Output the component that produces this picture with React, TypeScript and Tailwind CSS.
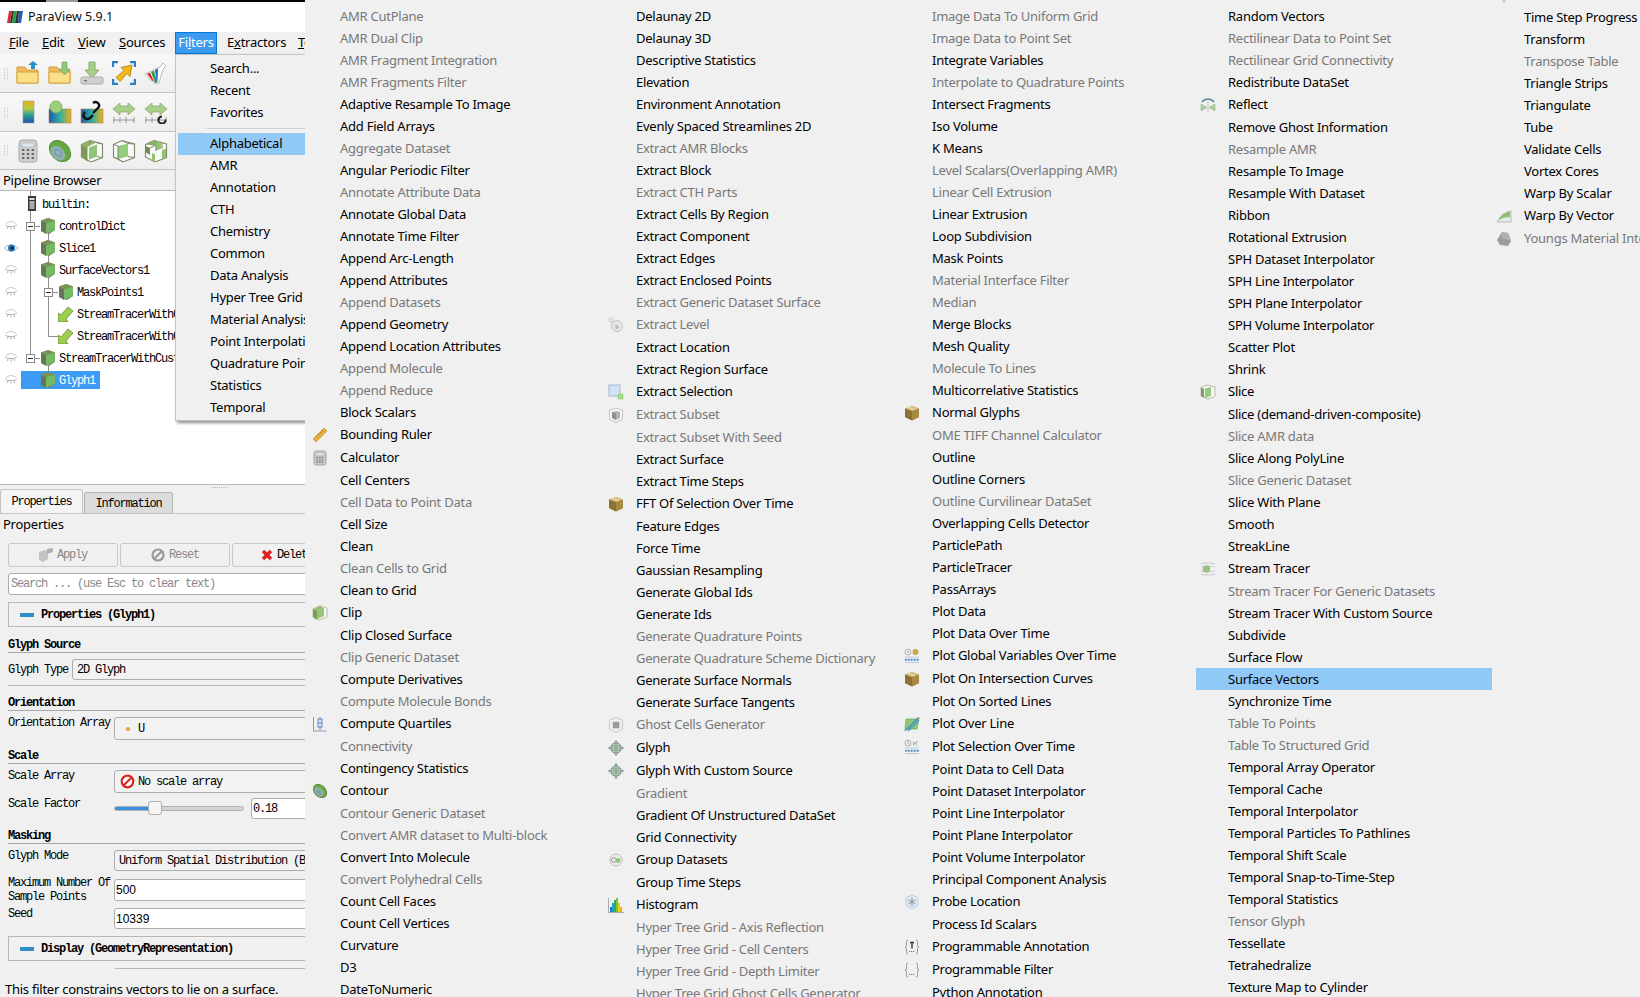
import React from "react";

const SANS = "font-['Noto_Sans',sans-serif]";
const MONO = "font-['Liberation_Mono',monospace] text-[12px] tracking-[-1.2px]";

type IconName =
  | "ruler" | "calc" | "clip" | "quart" | "contour" | "level" | "sel" | "subset" | "box" | "ghost" | "glyph"
  | "group" | "hist" | "plotg" | "plotl" | "plots" | "probe" | "proga" | "progf" | "reflect" | "slice"
  | "stream" | "warp" | "youngs" | "thresh";

function MenuIcon({ name }: { name: IconName }) {
  const p = { width: 16, height: 16, viewBox: "0 0 16 16" };
  switch (name) {
    case "ruler":
      return <svg {...p}><path d="M1 12 12 1l3 3L4 15z" fill="#e8b23c" stroke="#b98a22" strokeWidth=".6" /><path d="M4 9l1.5 1.5M6 7l1.5 1.5M8 5l1.5 1.5M10 3l1.5 1.5" stroke="#8a6a20" strokeWidth=".7" /></svg>;
    case "calc":
      return <svg {...p}><rect x="2" y="1" width="12" height="14" rx="2" fill="#c9c9c9" stroke="#a8a8a8" /><rect x="4" y="3" width="8" height="2.5" fill="#e6edf2" stroke="#9aa" strokeWidth=".4" /><path d="M4.5 7.5h7M4.5 9.8h7M4.5 12h7" stroke="#7c7c7c" strokeWidth="1.3" strokeDasharray="1.5 1.1" /></svg>;
    case "clip":
      return <svg {...p}><path d="M1 4l7-3 7 2v9l-8 3-6-3z" fill="#f6f6f6" stroke="#a8ad98" strokeWidth=".8" /><path d="M1 4l4 1.500V15l-4-3z" fill="#7f9c56" /><path d="M5 5.500l7-2v7.500l-7 3z" fill="#8fc878" /><path d="M1 4l7-3 4 2.500-7 2z" fill="#9db86f" /></svg>;
    case "quart":
      return <svg {...p}><path d="M1.5 1v14h13" fill="none" stroke="#8a9ab5" strokeWidth="1" /><rect x="6" y="3" width="4" height="8" fill="#dce8f8" stroke="#3f6fb5" strokeWidth=".8" /><path d="M8 1v2M8 11v3M6 7h4" stroke="#3f6fb5" strokeWidth=".8" /></svg>;
    case "contour":
      return <svg {...p}><ellipse cx="8" cy="8" rx="5.5" ry="7.5" transform="rotate(-45 8 8)" fill="#6fa845" stroke="#5d8a3e" /><ellipse cx="7" cy="9" rx="3.7" ry="5.4" transform="rotate(-45 7 9)" fill="#8fb2a8" /><ellipse cx="6.8" cy="9.2" rx="2" ry="3.2" transform="rotate(-45 7 9)" fill="#7aa0b2" /></svg>;
    case "level":
      return <svg {...p}><circle cx="9" cy="9" r="5.5" fill="#e6e6e6" stroke="#c4c4c4" /><circle cx="9" cy="10" r="2" fill="#bdbdbd" /><circle cx="3" cy="3" r="2" fill="none" stroke="#c4c4c4" /><path d="M4.5 4.5l1.5 1.5" stroke="#c4c4c4" /></svg>;
    case "sel":
      return <svg {...p}><rect x="1" y="1" width="11" height="11" fill="#d2e3f5" stroke="#a6b8cc" /><rect x="10" y="10" width="5" height="5" fill="#a6e08a" stroke="#74b45a" strokeDasharray="1 1" strokeWidth=".8" /></svg>;
    case "subset":
      return <svg {...p}><path d="M8 1l6.500 2v9.500L8 15.500l-6.500-3V3z" fill="#f2f2f2" stroke="#c4c4c4" /><path d="M4 5l4-1 4 1v6l-4 2-4-2z" fill="#b3b3b3" /><path d="M4 5l4 1.5V13l-4-2z" fill="#8e8e8e" /></svg>;
    case "box":
      return <svg {...p}><path d="M8 1l7 2.4V12l-7 3.4L1 12V3.4z" fill="#a58a4f" /><path d="M1 3.4 8 6v9.4L1 12z" fill="#8c7034" /><path d="M8 6l7-2.6V12l-7 3.4z" fill="#a78a3f" /><path d="M8 1l7 2.4L8 6 1 3.4z" fill="#d6be83" /><path d="M4 2l7 2.6" stroke="#f0e2b8" /></svg>;
    case "ghost":
      return <svg {...p}><path d="M8 .5l6.500 2.500v9.500L8 15.500l-6.500-3V3z" fill="#f0f0f0" stroke="#c9c9c9" /><rect x="4.800" y="4.800" width="6.500" height="6.500" fill="#9a9a9a" /></svg>;
    case "glyph":
      return <svg {...p}><circle cx="8" cy="8" r="5.2" fill="#b5d2ae" stroke="#7a8c90" /><path d="M8 3v10M3 8h10M4 5.2c2.5 1.2 5.5 1.2 8 0M4 10.8c2.5-1.2 5.5-1.2 8 0" stroke="#7a8c90" strokeWidth=".7" fill="none" /><path d="M8 0l2 2.2H6zM8 16l2-2.2H6zM0 8l2.2-2v4zM16 8l-2.2-2v4z" fill="#8a9a9e" /></svg>;
    case "group":
      return <svg {...p}><circle cx="8" cy="8" r="6" fill="#ededed" stroke="#bdbdbd" /><circle cx="6" cy="8" r="2.4" fill="none" stroke="#9a9a9a" /><circle cx="10" cy="8.5" r="2.4" fill="#8cc97a" /></svg>;
    case "hist":
      return <svg {...p}><path d="M.5 1v14.5H16" fill="none" stroke="#99a" strokeWidth=".8" /><rect x="2" y="10" width="2" height="5" fill="#2f6fd0" /><rect x="4" y="6" width="2" height="9" fill="#18a0d8" /><rect x="6" y="3" width="2" height="12" fill="#2aae5a" /><rect x="8" y="1" width="2" height="14" fill="#7cc23a" /><rect x="10" y="6" width="2" height="9" fill="#e8d020" /><rect x="12" y="10" width="2" height="5" fill="#f0b010" /></svg>;
    case "plotg":
      return <svg {...p}><circle cx="4" cy="4" r="3" fill="#eee" stroke="#999" strokeWidth=".7" /><path d="M4 2.2V4l1.4 1" stroke="#777" strokeWidth=".6" fill="none" /><circle cx="11.5" cy="4" r="3" fill="#c9a847" /><path d="M1 9h14M1 14.5h14" stroke="#bcd" /><path d="M1 11.8h1.6M3.6 11.8h2M6.6 11.8h2M9.6 11.8h2M12.6 11.8h2" stroke="#4a8ac8" strokeWidth="2" /></svg>;
    case "plots":
      return <svg {...p}><circle cx="4" cy="4" r="3" fill="#eee" stroke="#999" strokeWidth=".7" /><path d="M4 2.2V4l1.4 1" stroke="#777" strokeWidth=".6" fill="none" /><path d="M9 2l2 2 2-2 1 1-2 2 2 2-1 0-2-2-2 2z" fill="#9cc8a0" /><path d="M1 9h14M1 14.5h14" stroke="#bcd" /><path d="M1 11.8h1.6M3.6 11.8h2M6.6 11.8h2M9.6 11.8h2M12.6 11.8h2" stroke="#4a8ac8" strokeWidth="2" /></svg>;
    case "plotl":
      return <svg {...p}><path d="M2 3h12l1-2-2 12H2l-1 2z" fill="#8fc878" stroke="#6f9d58" strokeWidth=".7" /><path d="M2 14L14 2M4 15L15 4" stroke="#3a8fc0" strokeWidth="1.200" /></svg>;
    case "probe":
      return <svg {...p}><path d="M8 1l6 2.5v8L8 15l-6-3.5v-8z" fill="#dbe7f3" stroke="#c6d3df" /><path d="M8 4v8M4.5 6l7 4M11.5 6l-7 4" stroke="#7b8b99" strokeWidth=".9" /></svg>;
    case "proga":
    case "progf":
      return <svg {...p}><path d="M4 1C2 1 2.500 3 2.500 5S2.500 7.500 1 8c1.500.5 1.500 1 1.500 3s-.5 4 1.500 4M12 1c2 0 1.500 2 1.500 4s0 2.500 1.500 3c-1.500.5-1.500 1-1.500 3s.5 4-1.500 4" fill="none" stroke="#8a8a8a" strokeWidth=".9" /><path d="M5 12.500h6" stroke="#4a86c6" strokeWidth="1.200" strokeDasharray="1.200 .9" />{name === "proga" ? <path d="M6 3.500h4M8 3.500v6" stroke="#333" strokeWidth="1.400" /> : null}</svg>;
    case "reflect":
      return <svg {...p}><path d="M1 7l6 3.5L1 14zM15 7l-6 3.5 6 3.500z" fill="#a8d09a" stroke="#8fa88a" strokeWidth=".5" /><path d="M8 2v14" stroke="#c4c4c4" /><path d="M2 5c3-4 9-4 12 0" fill="none" stroke="#5b8a93" strokeWidth="1.600" /></svg>;
    case "slice":
      return <svg {...p}><path d="M1 3.5 7 1l8 2v9.5L8 15l-7-3z" fill="#f6f6f6" stroke="#a9ad9d" strokeWidth=".8" /><path d="M1 3.5 4 5v9l-3-2z" fill="#87995f" /><path d="M5 4.5 11 3v9l-6 2z" fill="#93cb7c" /></svg>;
    case "stream":
      return <svg {...p}><path d="M1 3c4-1.500 10-1.500 14 0M1 6c4-1 10-1 14 0M1 10c4 1 10 1 14 0M1 13c4 1.500 10 1.500 14 0" fill="none" stroke="#c4c4c4" strokeWidth=".9" /><circle cx="6.500" cy="8" r="3.200" fill="#90cc7c" stroke="#a0a896" /></svg>;
    case "warp":
      return <svg {...p}><path d="M1 14h14V3c-4 1-6 2.500-8 5-2 1.500-4 3-6 6z" fill="#eaeaea" stroke="#a5a5a5" strokeWidth=".7" /><path d="M2 12c2-3 4-6 7-7l5-2v6c-4 0-7 1-12 3z" fill="#8fc06e" /></svg>;
    case "youngs":
      return <svg {...p}><path d="M6 1l6 1 3 8-3 5-8-1-3-5z" fill="#9c9c9c" /><path d="M6 1l6 1 3 8-9-3z" fill="#b0b0b0" /></svg>;
    case "thresh":
      return <svg {...p}><circle cx="8" cy="8" r="5" fill="#e8e8e8" stroke="#aaa" /><path d="M8 0v16M0 8h16" stroke="#aaa" /></svg>;
  }
}

type Item = string | [string, IconName?, boolean?];
const d = (s: string, i?: IconName): Item => [s, i, true];
const ic = (s: string, i: IconName): Item => [s, i, false];

const col1: Item[] = [
  d("AMR CutPlane"), d("AMR Dual Clip"), d("AMR Fragment Integration"), d("AMR Fragments Filter"), "Adaptive Resample To Image", "Add Field Arrays",
  d("Aggregate Dataset"), "Angular Periodic Filter", d("Annotate Attribute Data"), "Annotate Global Data", "Annotate Time Filter", "Append Arc-Length",
  "Append Attributes", d("Append Datasets"), "Append Geometry", "Append Location Attributes", d("Append Molecule"), d("Append Reduce"), "Block Scalars",
  ic("Bounding Ruler", "ruler"), ic("Calculator", "calc"), "Cell Centers", d("Cell Data to Point Data"), "Cell Size", "Clean", d("Clean Cells to Grid"),
  "Clean to Grid", ic("Clip", "clip"), "Clip Closed Surface", d("Clip Generic Dataset"), "Compute Derivatives", d("Compute Molecule Bonds"),
  ic("Compute Quartiles", "quart"), d("Connectivity"), "Contingency Statistics", ic("Contour", "contour"), d("Contour Generic Dataset"),
  d("Convert AMR dataset to Multi-block"), "Convert Into Molecule", d("Convert Polyhedral Cells"), "Count Cell Faces", "Count Cell Vertices", "Curvature", "D3", "DateToNumeric",
];
const col2: Item[] = [
  "Delaunay 2D", "Delaunay 3D", "Descriptive Statistics", "Elevation", "Environment Annotation", "Evenly Spaced Streamlines 2D", d("Extract AMR Blocks"),
  "Extract Block", d("Extract CTH Parts"), "Extract Cells By Region", "Extract Component", "Extract Edges", "Extract Enclosed Points",
  d("Extract Generic Dataset Surface"), d("Extract Level", "level"), "Extract Location", "Extract Region Surface", ic("Extract Selection", "sel"),
  d("Extract Subset", "subset"), d("Extract Subset With Seed"), "Extract Surface", "Extract Time Steps", ic("FFT Of Selection Over Time", "box"), "Feature Edges",
  "Force Time", "Gaussian Resampling", "Generate Global Ids", "Generate Ids", d("Generate Quadrature Points"), d("Generate Quadrature Scheme Dictionary"),
  "Generate Surface Normals", "Generate Surface Tangents", d("Ghost Cells Generator", "ghost"), ic("Glyph", "glyph"), ic("Glyph With Custom Source", "glyph"),
  d("Gradient"), "Gradient Of Unstructured DataSet", "Grid Connectivity", ic("Group Datasets", "group"), "Group Time Steps", ic("Histogram", "hist"),
  d("Hyper Tree Grid - Axis Reflection"), d("Hyper Tree Grid - Cell Centers"), d("Hyper Tree Grid - Depth Limiter"), d("Hyper Tree Grid Ghost Cells Generator"),
];
const col3: Item[] = [
  d("Image Data To Uniform Grid"), d("Image Data to Point Set"), "Integrate Variables", d("Interpolate to Quadrature Points"), "Intersect Fragments", "Iso Volume", "K Means",
  d("Level Scalars(Overlapping AMR)"), d("Linear Cell Extrusion"), "Linear Extrusion", "Loop Subdivision", "Mask Points", d("Material Interface Filter"), d("Median"),
  "Merge Blocks", "Mesh Quality", d("Molecule To Lines"), "Multicorrelative Statistics", ic("Normal Glyphs", "box"), d("OME TIFF Channel Calculator"), "Outline",
  "Outline Corners", d("Outline Curvilinear DataSet"), "Overlapping Cells Detector", "ParticlePath", "ParticleTracer", "PassArrays", "Plot Data", "Plot Data Over Time",
  ic("Plot Global Variables Over Time", "plotg"), ic("Plot On Intersection Curves", "box"), "Plot On Sorted Lines", ic("Plot Over Line", "plotl"),
  ic("Plot Selection Over Time", "plots"), "Point Data to Cell Data", "Point Dataset Interpolator", "Point Line Interpolator", "Point Plane Interpolator",
  "Point Volume Interpolator", "Principal Component Analysis", ic("Probe Location", "probe"), "Process Id Scalars", ic("Programmable Annotation", "proga"),
  ic("Programmable Filter", "progf"), "Python Annotation",
];
const col4: Item[] = [
  "Random Vectors", d("Rectilinear Data to Point Set"), d("Rectilinear Grid Connectivity"), "Redistribute DataSet", ic("Reflect", "reflect"), "Remove Ghost Information",
  d("Resample AMR"), "Resample To Image", "Resample With Dataset", "Ribbon", "Rotational Extrusion", "SPH Dataset Interpolator", "SPH Line Interpolator",
  "SPH Plane Interpolator", "SPH Volume Interpolator", "Scatter Plot", "Shrink", ic("Slice", "slice"), "Slice (demand-driven-composite)", d("Slice AMR data"),
  "Slice Along PolyLine", d("Slice Generic Dataset"), "Slice With Plane", "Smooth", "StreakLine", ic("Stream Tracer", "stream"), d("Stream Tracer For Generic Datasets"),
  "Stream Tracer With Custom Source", "Subdivide", "Surface Flow", "Surface Vectors", "Synchronize Time", d("Table To Points"), d("Table To Structured Grid"),
  "Temporal Array Operator", "Temporal Cache", "Temporal Interpolator", "Temporal Particles To Pathlines", "Temporal Shift Scale", "Temporal Snap-to-Time-Step",
  "Temporal Statistics", d("Tensor Glyph"), "Tessellate", "Tetrahedralize", "Texture Map to Cylinder",
];
const col5: Item[] = [
  ic("", "thresh"), "Time Step Progress Bar", "Transform", d("Transpose Table"), "Triangle Strips", "Triangulate", "Tube", "Validate Cells", "Vortex Cores", "Warp By Scalar",
  ic("Warp By Vector", "warp"), d("Youngs Material Interface", "youngs"),
];

function MenuRow({ item }: { item: Item }) {
  const [label, icon, dis] = typeof item === "string" ? [item, undefined, false] : item;
  const hi = label === "Surface Vectors";
  return (
    <div className={`flex items-center ${icon ? "h-[23px] pt-[1px]" : "h-[22px] pt-[2px]"} ${hi ? "bg-[#90c8f6]" : ""}`}>
      <div className="flex w-[32px] shrink-0 justify-start pl-[4px]">{icon ? <MenuIcon name={icon} /> : null}</div>
      <span className={`whitespace-nowrap ${dis ? "text-[#787878]" : "text-black"}`}>{label}</span>
    </div>
  );
}

function MenuCol({ items, className = "" }: { items: Item[]; className?: string }) {
  return (
    <div className={`w-[296px] shrink-0 pt-[5px] ${className}`}>
      {items.map((it, i) => (
        <MenuRow key={i} item={it} />
      ))}
    </div>
  );
}

function Grip() {
  return (
    <div className="ml-[4px] mr-[8px] grid w-[4px] grid-cols-2 gap-[1px]">
      {Array.from({ length: 12 }).map((_, i) => (
        <div key={i} className="h-[1px] w-[1px] bg-[#c8c8c8]" />
      ))}
    </div>
  );
}

const T = { width: 24, height: 24, viewBox: "0 0 24 24" };
function Cube3({ v }: { v: number }) {
  const frame = <path d="M1.500 5.500L10 1.500l12.500 3.500v13.500L11 23l-9.500-5z" fill="#fafafa" stroke="#7f8a6c" strokeWidth="1.100" />;
  return (
    <svg {...T}>
      {frame}
      {v === 0 ? (
        <>
          <path d="M1.500 5.500l6 2.500v14.500l-6-4.500z" fill="#7e9a56" />
          <path d="M1.500 5.500L10 1.500l6 2-8.500 4.500z" fill="#94ae68" />
          <path d="M9 8.500l8-3v12l-8 3z" fill="#8ec578" />
          <path d="M10 1.500V4M16 3.500l6.500 1.500M17 17.500l5.500 1" stroke="#7f8a6c" />
        </>
      ) : v === 1 ? (
        <>
          <path d="M6 7l10-2.500v13L6 20z" fill="#92cc7c" />
          <path d="M1.500 5.500L6 7v13l-4.500-2zM10 1.500L16 4.500" fill="none" stroke="#7f8a6c" />
          <path d="M16 4.500l6.500.5M16 17.500l6.500 1M6 20l5 3" stroke="#7f8a6c" />
        </>
      ) : (
        <>
          <path d="M1.500 5.500L10 1.500l7 2-7 3z" fill="#8ab066" />
          <path d="M2 7l4 2v7l-4-2.500z" fill="#6f8f52" />
          <path d="M12 4l5-1.500v7l-5 2zM18 11l4-1v8l-4 2zM8 14l3 1.500v7l-3-2z" fill="#8ec26c" />
          <path d="M6 9l6-3v6M18 3v7" stroke="#7f8a6c" fill="none" />
        </>
      )}
    </svg>
  );
}

function TbIcon({ n }: { n: string }) {
  switch (n) {
    case "open":
      return <svg {...T}><path d="M1 6h8l2 3h11v13H1z" fill="#f0ba5c" stroke="#d8a040" /><path d="M1 11h21v11H1z" fill="#fbe088" stroke="#d8a040" /><path d="M15 8V4h-3l5-4 5 4h-3v4z" fill="#2f8fc8" /></svg>;
    case "save":
      return <svg {...T}><path d="M1 6h8l2 3h11v13H1z" fill="#f0ba5c" stroke="#d8a040" /><path d="M1 11h21v11H1z" fill="#fbe088" stroke="#d8a040" /><path d="M14 1h5v7h3l-5.500 6-5.500-6h3z" fill="#8fc878" stroke="#6fa05a" strokeWidth=".6" /></svg>;
    case "load":
      return <svg {...T}><path d="M9 1h6v8h4l-7 8-7-8h4z" fill="#a6d08a" stroke="#86aa70" /><rect x="1" y="16" width="22" height="7" rx="1.500" fill="#d0d0d0" stroke="#aaa" /><rect x="4" y="19" width="3" height="1.500" fill="#777" /></svg>;
    case "reset":
      return <svg {...T}><path d="M1 6V1h5M18 1h5v5M23 18v5h-5M6 23H1v-5" fill="none" stroke="#2f80c0" strokeWidth="2.400" /><path d="M20 4L9 6.500l3 3-8 7 4 4 7-8 3 3z" fill="#f0b818" stroke="#a88010" strokeWidth=".8" /></svg>;
    case "flask":
      return <svg {...T}><path d="M1 13L16 6l3-4 3 3-3 3-4 14c-3 2-10-3-14-9z" fill="#fff" stroke="#bbb" /><path d="M3 13l3-1.500 4 9-2-1z" fill="#d23030" /><path d="M7 11l3-1.500 3 12.500-2 0z" fill="#2ea04c" /><path d="M11 9l3-1.500-.5 13.500-1 0z" fill="#1f6cc0" /></svg>;
    case "bar":
      return <svg {...T}><defs><linearGradient id="gb" x1="0" y1="0" x2="0" y2="1"><stop offset="0" stopColor="#e8b020" /><stop offset=".35" stopColor="#b8c840" /><stop offset=".6" stopColor="#30a890" /><stop offset="1" stopColor="#1c50b0" /></linearGradient></defs><rect x="7" y="1" width="11" height="22" fill="url(#gb)" stroke="#999" strokeWidth=".6" /></svg>;
    case "ball":
      return <svg {...T}><defs><linearGradient id="gm" x1="0" y1="0" x2="1" y2="0"><stop offset="0" stopColor="#2058b0" /><stop offset=".5" stopColor="#30b0a0" /><stop offset="1" stopColor="#f0b020" /></linearGradient></defs><rect x="1" y="9" width="22" height="14" fill="url(#gm)" stroke="#a88850" strokeWidth=".6" /><circle cx="8" cy="7" r="6" fill="#9cd078" stroke="#88a868" /></svg>;
    case "link":
      return <svg {...T}><defs><linearGradient id="gl" x1="0" y1="0" x2="1" y2="0"><stop offset="0" stopColor="#2058b0" /><stop offset=".5" stopColor="#30b0a0" /><stop offset="1" stopColor="#f0b020" /></linearGradient></defs><rect x="1" y="9" width="22" height="14" fill="url(#gl)" stroke="#a88850" strokeWidth=".6" /><path d="M13 3c4-3 8 2 5 5l-5 5M5 12c-4 4 1 9 5 6l3-3" fill="none" stroke="#111" strokeWidth="2.400" /></svg>;
    case "rng":
    case "rngc":
      return <svg {...T}><path d="M1 9l7-6v3h8V3l7 6-7 6v-3H8v3z" fill="#a8d08a" stroke="#88a070" strokeWidth=".7" /><path d="M1 20h22M2 17v6M8 17v6M14 17v6M22 17v6" stroke="#999" strokeWidth="1" />{n === "rngc" ? <circle cx="18" cy="20" r="3.500" fill="none" stroke="#222" strokeWidth="2" strokeDasharray="16 5" /> : null}</svg>;
    case "calc":
      return <svg {...T}><rect x="3" y="1" width="18" height="22" rx="3" fill="#cfcfcf" stroke="#a8a8a8" /><rect x="6" y="4" width="12" height="4" fill="#dde6ee" stroke="#9aa" strokeWidth=".5" /><path d="M6 11h12M6 15h12M6 19h12" stroke="#666" strokeWidth="2" strokeDasharray="2.400 2.400" /></svg>;
    case "contour":
      return <svg {...T}><ellipse cx="12" cy="12" rx="9" ry="12" transform="rotate(-45 12 12)" fill="#63a840" stroke="#5d8a3e" /><ellipse cx="10" cy="14" rx="6" ry="8.500" transform="rotate(-45 10 14)" fill="#8fb2a8" /><ellipse cx="10" cy="14" rx="3.500" ry="5.500" transform="rotate(-45 10 14)" fill="#7aa0b2" /><ellipse cx="10" cy="14" rx="1.500" ry="2.500" transform="rotate(-45 10 14)" fill="#9ab6c4" /></svg>;
    case "c0": return <Cube3 v={0} />;
    case "c1": return <Cube3 v={1} />;
    default: return <Cube3 v={2} />;
  }
}

function Toolbar({ icons, h }: { icons: string[]; h: string }) {
  return (
    <div className={`flex items-center border-b border-[#c4c4c4] bg-linear-to-b from-[#f8f8f8] to-[#eeeeee] ${h}`}>
      <Grip />
      <div className="flex gap-[8px]">
        {icons.map((n) => (
          <TbIcon key={n} n={n} />
        ))}
      </div>
    </div>
  );
}

function TreeCube() {
  return (
    <svg width="16" height="16" viewBox="0 0 16 16">
      <path d="M8 0l7 2.500V12L9 16l-8-3V2.500z" fill="#6f7d5e" />
      <path d="M1 3l5 2v11l-5-3z" fill="#68755a" />
      <path d="M6 5l9-2.500V12l-9 4z" fill="#73ba62" />
      <path d="M8 0l7 2.500L6 5 1 3z" fill="#7c9458" />
    </svg>
  );
}
function Arrow() {
  return (
    <svg width="16" height="16" viewBox="0 0 16 16">
      <path d="M0 16V7l3 2 7-8 5 4-7 8 2 3z" fill="#9ccc50" stroke="#6a8c30" strokeWidth=".8" />
    </svg>
  );
}
function Eye({ on }: { on?: boolean }) {
  return on ? (
    <svg width="14" height="12" viewBox="0 0 14 12">
      <path d="M0 6c3-4 10-4 14 0-4 4-11 4-14 0z" fill="#fff" stroke="#9fb4c8" />
      <circle cx="7.500" cy="6" r="3.500" fill="#1f7ac0" />
      <circle cx="8" cy="6" r="1.600" fill="#0a1a2a" />
    </svg>
  ) : (
    <svg width="12" height="10" viewBox="0 0 12 10">
      <path d="M.5 4.500C3 .5 9 .5 11.500 4.500" fill="none" stroke="#c8c8c8" />
      <path d="M.5 5.500C3 7 9 7 11.500 5.500M3 7l-.5 2M6 7.500V9.500M9 7l.5 2" fill="none" stroke="#b0b0b0" />
    </svg>
  );
}

const tree: { label: string; x: number; icon: "server" | "cube" | "arrow"; eye?: "on" | "off"; sel?: boolean }[] = [
  { label: "builtin:", x: 25, icon: "server" },
  { label: "controlDict", x: 40, icon: "cube", eye: "off" },
  { label: "Slice1", x: 40, icon: "cube", eye: "on" },
  { label: "SurfaceVectors1", x: 40, icon: "cube", eye: "off" },
  { label: "MaskPoints1", x: 58, icon: "cube", eye: "off" },
  { label: "StreamTracerWithCustomSource1", x: 58, icon: "arrow", eye: "off" },
  { label: "StreamTracerWithCustomSource2", x: 58, icon: "arrow", eye: "off" },
  { label: "StreamTracerWithCustomSource3", x: 40, icon: "cube", eye: "off" },
  { label: "Glyph1", x: 21, icon: "cube", eye: "off", sel: true },
];

function TreeLines() {
  const box = (x: number, y: number) => (
    <g key={`${x}-${y}`}>
      <rect x={x + 0.5} y={y + 0.5} width="8" height="8" fill="#fff" stroke="#8a8a8a" />
      <path d={`M${x + 2} ${y + 4.5}h5`} stroke="#222" />
    </g>
  );
  return (
    <svg className="absolute left-0 top-0" width="175" height="200" viewBox="0 0 175 200">
      <path d="M30.500 0V167M48.500 42V50M48.500 65V72M48.500 87V145.500H58M48.500 175V180" fill="none" stroke="#8e8e8e" />
      {box(26, 31)}
      {box(44, 97)}
      {box(26, 163)}
      <path d="M35 35.500h5M53 101.500h5M35 167.500h5" stroke="#8e8e8e" />
    </svg>
  );
}

function TreeRow({ r }: { r: (typeof tree)[number] }) {
  return (
    <div className="relative flex h-[22px] w-[175px] items-center overflow-hidden">
      <div className="absolute left-[4px] top-[5px] flex w-[14px] justify-center">
        {r.eye ? <Eye on={r.eye === "on"} /> : null}
      </div>
      <div className={`flex items-center ${r.sel ? "h-[18px] pl-[19px] pr-[5px] bg-[#3d9bf5] text-white" : "text-black"} `} style={{ marginLeft: r.x }}>
        {r.icon === "cube" ? <TreeCube /> : r.icon === "arrow" ? <Arrow /> : (
          <svg width="16" height="16" viewBox="0 0 16 16"><rect x="3" y="0" width="8" height="15" fill="#3a3a3a" /><rect x="4.500" y="2" width="5" height="2" fill="#ddd" /><rect x="4.500" y="5" width="5" height="8" fill="#aaa" /></svg>
        )}
        <span className={`whitespace-nowrap pt-[2px] ${r.icon === "server" ? "ml-[1px]" : "ml-[3px]"}`}>{r.label}</span>
      </div>
    </div>
  );
}

function Heading({ children, className = "" }: { children: React.ReactNode; className?: string }) {
  return <div className={`flex h-[17px] items-center border-b border-[#a8a8a8] pt-[2px] font-bold ${className}`}>{children}</div>;
}
function Combo({ children, className = "" }: { children: React.ReactNode; className?: string }) {
  return <div className={`flex flex-1 items-center overflow-hidden whitespace-nowrap rounded-[3px] border border-[#adadad] bg-[#f2f2f2] pl-[4px] ${className}`}>{children}</div>;
}
function Group({ children, className = "" }: { children: React.ReactNode; className?: string }) {
  return (
    <div className={`flex h-[25px] items-center border border-[#b8b8b8] pl-[11px] pt-[1px] font-bold ${className}`}>
      <span className="mr-[7px] h-[4px] w-[14px] bg-[#2e8fc8]" />
      {children}
    </div>
  );
}
function Btn({ children, dim }: { children: React.ReactNode; dim?: boolean }) {
  return (
    <div className={`flex h-[24px] w-[110px] items-center justify-center gap-[4px] rounded-[3px] border border-[#c8c8c8] bg-[#f0f0f0] ${dim ? "text-[#888]" : "text-black"}`}>
      {children}
    </div>
  );
}
const Lbl = ({ children, w = "w-[106px]" }: { children: React.ReactNode; w?: string }) => (
  <div className={`${w} shrink-0 leading-[12px] whitespace-nowrap`}>{children}</div>
);

export default function App() {
  return (
    <div className={`flex h-[997px] w-[1640px] overflow-hidden bg-[#f0f0f0] text-[13px] tracking-[-0.25px] ${SANS}`}>
      <div className="relative w-[305px] shrink-0 overflow-hidden bg-white">
        <div className="flex h-[2px] bg-black">
          <div className="ml-[46px] w-[32px] bg-[#9a9a9a]" />
        </div>
        <div className="flex h-[30px] items-center pl-[7px] text-[#111]">
          <svg width="16" height="12" viewBox="0 0 16 12" className="mr-[5px]">
            <path d="M2 0h3L3 12H0z" fill="#d8302a" />
            <path d="M7 0h3L8 12H5z" fill="#2aa04a" />
            <path d="M12 0h4l-2 12h-3z" fill="#1f5fb8" />
            <path d="M5 0h2L5 12H3zM10 0h2l-1 12H8z" fill="#333" />
          </svg>
          <span className="text-[12.500px] tracking-normal">ParaView 5.9.1</span>
        </div>
        <div className="flex h-[22px] items-center whitespace-nowrap bg-[#f0f0f0] text-black">
          <span className="ml-[9px] w-[33px] shrink-0"><u>F</u>ile</span>
          <span className="w-[36px] shrink-0"><u>E</u>dit</span>
          <span className="w-[41px] shrink-0"><u>V</u>iew</span>
          <span className="w-[56px] shrink-0"><u>S</u>ources</span>
          <span className="flex h-[22px] w-[42px] shrink-0 items-center justify-center border border-[#0078d7] bg-[#3d9bef] text-white">Fi<u>l</u>ters</span>
          <span className="ml-[10px] w-[71px] shrink-0">E<u>x</u>tractors</span>
          <span className="shrink-0"><u>T</u>ools</span>
        </div>
        <Toolbar h="h-[39px]" icons={["open", "save", "load", "reset", "flask"]} />
        <Toolbar h="h-[39px]" icons={["bar", "ball", "link", "rng", "rngc"]} />
        <Toolbar h="h-[38px]" icons={["calc", "contour", "c0", "c1", "c2"]} />
        <div className="flex h-[21px] items-center border-b border-[#b8b8b8] bg-[#f0f0f0] pl-[3px] pt-[2px] text-black">Pipeline Browser</div>
        <div className={`relative h-[294px] overflow-hidden border-b border-[#b8b8b8] bg-white pt-[2px] ${MONO}`}>
          <TreeLines />
          {tree.map((r) => (
            <TreeRow key={r.label} r={r} />
          ))}
        </div>

        <div className={`h-[512px] bg-[#f0f0f0] text-black ${MONO}`}>
          <div className="flex h-[6px] justify-center pl-[135px]">
            <div className="mt-[2px] h-[1px] w-[16px] border-t border-dotted border-[#bbb]" />
          </div>
          <div className="flex h-[23px] items-end border-b border-[#c4c4c4]">
            <div className="flex h-[24px] w-[83px] items-center justify-center rounded-t-[3px] border border-b-0 border-[#c4c4c4] bg-[#f4f4f4] pt-[1px]">Properties</div>
            <div className="ml-[1px] flex h-[21px] w-[89px] items-center justify-center rounded-t-[3px] border border-b-0 border-[#b4b4b4] bg-[#dcdcdc] pt-[1px]">Information</div>
          </div>
          <div className={`flex h-[22px] items-center pl-[3px] text-[13px] tracking-[-0.25px] text-black ${SANS}`}>Properties</div>
          <div className="w-[345px] pl-[8px]">
            <div className="mt-[7px] flex gap-[2px]">
              <Btn dim>
                <svg width="14" height="14" viewBox="0 0 14 14"><path d="M0 4l5-2 4 1v8l-5 3-4-2z" fill="#c4c4c4" /><path d="M8 1l6-1v4l-6 2z" fill="#b0b0b0" /></svg>
                Apply
              </Btn>
              <Btn dim>
                <svg width="14" height="14" viewBox="0 0 14 14"><circle cx="7" cy="7" r="5.500" fill="none" stroke="#9a9a9a" strokeWidth="2.200" /><path d="M3 11l8-8" stroke="#9a9a9a" strokeWidth="2.200" /></svg>
                Reset
              </Btn>
              <Btn>
                <svg width="12" height="12" viewBox="0 0 12 12"><path d="M2 2l8 8M10 2l-8 8" stroke="#e02020" strokeWidth="3.400" /></svg>
                Delete
              </Btn>
            </div>
            <div className="mt-[6px] flex h-[22px] items-center rounded-[3px] border border-[#adadad] bg-white pl-[2px] text-[#888]">Search ... (use Esc to clear text)</div>
            <Group className="mt-[7px]">Properties (Glyph1)</Group>
            <Heading className="mt-[9px]">Glyph Source</Heading>
            <div className="mt-[6px] flex h-[21px] items-center">
              <Lbl w="w-[64px]">Glyph Type</Lbl>
              <Combo className="h-[21px]">2D Glyph</Combo>
            </div>
            <div className="mt-[5px] h-[1px] bg-[#b8b8b8]" />
            <Heading className="mt-[8px]">Orientation</Heading>
            <div className="mt-[6px] flex h-[23px] items-start">
              <Lbl>Orientation Array</Lbl>
              <Combo className="h-[23px] pl-[11px]">
                <span className="mr-[8px] h-[4px] w-[4px] rounded-full bg-[#e8a820]" />U
              </Combo>
            </div>
            <Heading className="mt-[7px]">Scale</Heading>
            <div className="mt-[6px] flex h-[23px] items-start">
              <Lbl>Scale Array</Lbl>
              <Combo className="h-[23px] pl-[5px]">
                <svg width="15" height="15" viewBox="0 0 15 15" className="mr-[3px]"><circle cx="7.500" cy="7.500" r="5.800" fill="#fff" stroke="#d82828" strokeWidth="2.200" /><path d="M3.500 11.500l8-8" stroke="#d82828" strokeWidth="2.200" /></svg>
                No scale array
              </Combo>
            </div>
            <div className="mt-[5px] flex h-[21px] items-start">
              <Lbl>Scale Factor</Lbl>
              <div className="relative mr-[7px] mt-[8px] flex h-[5px] w-[130px] overflow-visible rounded-full border border-[#b0b0b0] bg-[#d4d4d4]">
                <div className="h-full w-[34px] rounded-full bg-[#3b8fe0]" />
                <div className="absolute left-[33px] top-[-6px] h-[14px] w-[14px] rounded-[3px] border border-[#b0b0b0] bg-[#f4f4f4]" />
              </div>
              <div className="flex h-[21px] flex-1 items-center rounded-[3px] border border-[#adadad] bg-white pl-[1px]">0.18</div>
            </div>
            <Heading className="mt-[8px]">Masking</Heading>
            <div className="mt-[6px] flex h-[21px] items-start">
              <Lbl>Glyph Mode</Lbl>
              <Combo className="h-[21px]">Uniform Spatial Distribution (Bounds Based)</Combo>
            </div>
            <div className="mt-[8px] flex h-[22px] items-start">
              <div className="-mt-[3px] w-[106px] shrink-0 leading-[14px] whitespace-nowrap">Maximum Number Of<br />Sample Points</div>
              <div className={`flex h-[22px] flex-1 items-center rounded-[3px] border border-[#adadad] bg-white pl-[1px] text-[12px] tracking-normal font-['Liberation_Sans',sans-serif]`}>500</div>
            </div>
            <div className="mt-[7px] flex h-[21px] items-start">
              <Lbl>Seed</Lbl>
              <div className={`flex h-[21px] flex-1 items-center rounded-[3px] border border-[#adadad] bg-white pl-[1px] text-[12px] tracking-normal font-['Liberation_Sans',sans-serif]`}>10339</div>
            </div>
            <Group className="mt-[7px]">Display (GeometryRepresentation)</Group>
            <div className="ml-[107px] mt-[7px] h-[1px] bg-[#b8b8b8]" />
          </div>
          <div className={`mt-[11px] whitespace-nowrap pl-[5px] text-[13px] tracking-[-0.25px] ${SANS}`}>This filter constrains vectors to lie on a surface.</div>
        </div>

        <div className={`absolute left-[175px] top-[54px] h-[367px] w-[140px] border border-[#c4c4c4] bg-[#f0f0f0] pl-[2px] pt-[3px] text-black shadow-[2px_2px_3px_rgba(0,0,0,0.45)]`}>
          {["Search...", "Recent", "Favorites"].map((s) => (
            <div key={s} className="flex h-[22px] items-center pl-[32px]">{s}</div>
          ))}
          <div className="my-[4px] ml-[29px] h-[1px] bg-[#cfcfcf]" />
          {["Alphabetical", "AMR", "Annotation", "CTH", "Chemistry", "Common", "Data Analysis", "Hyper Tree Grid", "Material Analysis", "Point Interpolation", "Quadrature Points", "Statistics", "Temporal"].map((s) => (
            <div key={s} className={`flex h-[22px] items-center whitespace-nowrap pl-[32px] ${s === "Alphabetical" ? "bg-[#90c8f6]" : ""}`}>{s}</div>
          ))}
        </div>
      </div>

      <div className={`flex flex-1 items-start overflow-hidden bg-[#f0f0f0] pl-[3px] text-[13px]`}>
        <MenuCol items={col1} />
        <MenuCol items={col2} />
        <MenuCol items={col3} />
        <MenuCol items={col4} />
        <MenuCol items={col5} className="-mt-[22px]" />
      </div>
    </div>
  );
}
